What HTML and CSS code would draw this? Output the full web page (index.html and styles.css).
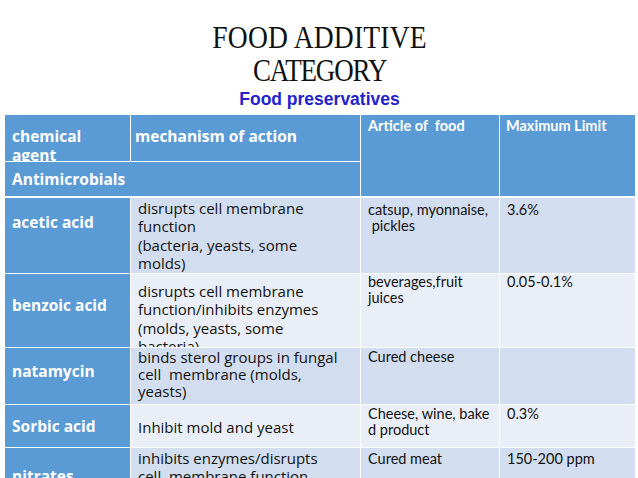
FILE: index.html
```html
<!DOCTYPE html>
<html>
<head>
<meta charset="utf-8">
<link rel="stylesheet" href="styles.css">
</head>
<body>
<div class="slide">
  <h1 class="title"><span class="t1">FOOD ADDITIVE</span><span class="t2">CATEGORY</span></h1>
  <div class="subtitle">Food preservatives</div>
  <div class="table">
    <div class="cell hd c1 h-top">chemical<br>agent</div>
    <div class="cell hd c2 h-top">mechanism of action</div>
    <div class="cell hd c3 span2">Article of&nbsp; food</div>
    <div class="cell hd c4 span2">Maximum Limit</div>
    <div class="cell hd anti">Antimicrobials</div>

    <div class="cell name r-acetic">acetic acid</div>
    <div class="cell mech dark r-acetic-m">disrupts cell membrane<br>function<br>(bacteria, yeasts, some<br>molds)</div>
    <div class="cell small dark p4">catsup, myonnaise,<br>&nbsp;pickles</div>
    <div class="cell small dark p4">3.6%</div>

    <div class="cell name r-benzoic">benzoic acid</div>
    <div class="cell mech light r-benzoic-m">disrupts cell membrane<br>function/inhibits enzymes<br>(molds, yeasts, some<br>bacteria)</div>
    <div class="cell small light p0">beverages,fruit<br>juices</div>
    <div class="cell small light p0">0.05-0.1%</div>

    <div class="cell name r-nata">natamycin</div>
    <div class="cell mech dark r-nata-m">binds sterol groups in fungal<br>cell&nbsp; membrane (molds,<br>yeasts)</div>
    <div class="cell small dark p1">Cured cheese</div>
    <div class="cell small dark p1"></div>

    <div class="cell name">Sorbic acid</div>
    <div class="cell mech light r-sorbic-m">Inhibit mold and yeast</div>
    <div class="cell small light p1">Cheese, wine, bake<br>d product</div>
    <div class="cell small light p1">0.3%</div>

    <div class="cell name r-nitr">nitrates</div>
    <div class="cell mech dark r-nitr-m">inhibits enzymes/disrupts<br>cell&nbsp; membrane function</div>
    <div class="cell small dark p3">Cured meat</div>
    <div class="cell small dark p3">150-200 ppm</div>
  </div>
</div>
</body>
</html>
```

FILE: styles.css
```css
html, body {
  margin: 0;
  padding: 0;
  background: #ffffff;
}

.slide {
  width: 638px;
  height: 478px;
  overflow: hidden;
  padding-top: 21px;
  box-sizing: border-box;
}

.title {
  margin: 0;
  font-family: "Liberation Serif", "Times New Roman", serif;
  font-weight: normal;
  font-size: 31px;
  line-height: 33px;
  color: #111111;
  text-align: center;
  display: flex;
  flex-direction: column;
  align-items: center;
}

.t1 {
  display: inline-block;
  transform: scaleX(0.89);
  letter-spacing: 0.2px;
  margin-left: 2px;
}

.t2 {
  display: inline-block;
  transform: scaleX(0.87);
  letter-spacing: -1.3px;
  margin-left: 2px;
}

.subtitle {
  margin-top: 2px;
  font-family: "Liberation Sans", Arial, sans-serif;
  font-weight: bold;
  font-size: 17.5px;
  line-height: 20px;
  color: #2323c8;
  text-align: center;
  padding-left: 1px;
}

.table {
  margin: 6px 0 0 5px;
  width: 630px;
  display: grid;
  grid-template-columns: 125px 229px 138px 135px;
  grid-template-rows: 46px 34px 76px 73px 56px 42px 62px;
  column-gap: 1px;
  row-gap: 1px;
  background: #ffffff;
}

.cell {
  overflow: hidden;
  box-sizing: border-box;
  color: #111111;
}

.hd {
  background: #5b9bd5;
  color: #ffffff;
  font-weight: bold;
}

.h-top {
  font-family: "Open Sans", sans-serif;
  font-size: 15.5px;
  line-height: 18.5px;
  padding: 12px 4px 0 7px;
}

.c2 {
  padding-left: 4px;
}

.span2 {
  grid-row: span 2;
  font-family: Lato, sans-serif;
  font-size: 14.5px;
  line-height: 16px;
  padding: 3px 6px 0 7px;
}

.c4 {
  padding-left: 6px;
}

.anti {
  grid-column: span 2;
  grid-row: 2;
  font-family: "Open Sans", sans-serif;
  font-size: 15.5px;
  display: flex;
  align-items: center;
  padding-left: 7px;
}

.name {
  background: #5b9bd5;
  color: #ffffff;
  font-family: "Open Sans", sans-serif;
  font-weight: bold;
  font-size: 15.5px;
  display: flex;
  align-items: center;
  padding-left: 7px;
}

.r-acetic {
  margin-top: 1px;
  padding-bottom: 28px;
}

.r-benzoic {
  padding-bottom: 12px;
}

.r-nata {
  padding-bottom: 10px;
}

.r-nitr {
  align-items: flex-start;
  padding-top: 17px;
}

.mech {
  font-family: "Open Sans", sans-serif;
  font-size: 15px;
  line-height: 18.3px;
  padding: 1px 4px 0 7px;
}

.r-acetic-m {
  margin-top: 1px;
  padding-top: 1px;
}

.r-benzoic-m {
  padding-top: 8px;
}

.r-nata-m {
  line-height: 17px;
  padding-top: 1px;
}

.r-sorbic-m {
  padding-top: 13px;
}

.r-nitr-m {
  padding-top: 1px;
}

.small {
  font-family: Lato, sans-serif;
  font-size: 14.5px;
  line-height: 16px;
  padding-left: 7px;
  padding-right: 2px;
}

.dark {
  background: #d2deef;
}

.light {
  background: #eaeff7;
}

.table > .small.dark.p4 {
  margin-top: 1px;
}

.p4 {
  padding-top: 4px;
}

.p3 {
  padding-top: 3px;
}

.p1 {
  padding-top: 1px;
}

.p0 {
  padding-top: 0;
}
```
